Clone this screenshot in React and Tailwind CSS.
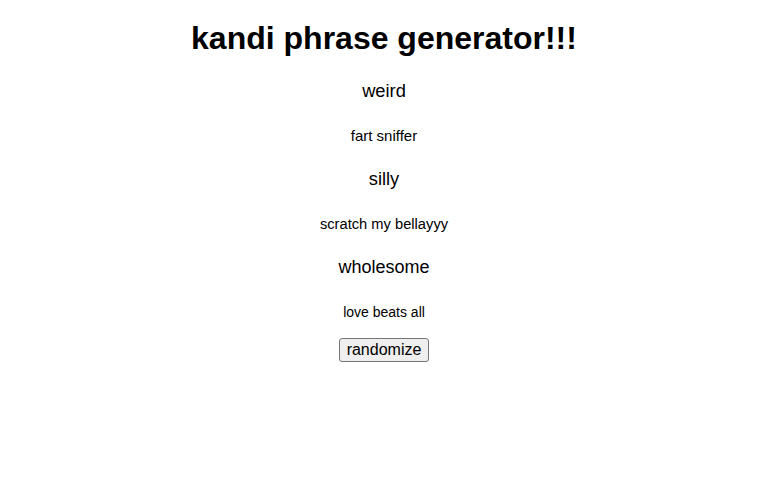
import React, { useState } from "react";

const phrases = {
  weird: ["fart sniffer", "smell my socks", "goblin mode"],
  silly: ["scratch my bellayyy", "bonk", "wiggle wiggle"],
  wholesome: ["love beats all", "you are enough", "hug me"],
};

const pick = (list) => list[Math.floor(Math.random() * list.length)];

const App = () => {
  const [current, setCurrent] = useState({
    weird: "fart sniffer",
    silly: "scratch my bellayyy",
    wholesome: "love beats all",
  });

  const randomize = () => {
    setCurrent({
      weird: pick(phrases.weird),
      silly: pick(phrases.silly),
      wholesome: pick(phrases.wholesome),
    });
  };

  return (
    <div className="min-h-[480px] bg-white text-black font-['Liberation_Sans',Arial,sans-serif] flex flex-col items-center">
      <h1 className="mt-[20px] text-[32px] leading-[37px] font-bold">
        kandi phrase generator!!!
      </h1>

      {/* category headings with their phrase below */}
      <h3 className="mt-[23px] text-[18.3px] leading-[22px]">weird</h3>
      <p className="mt-[25px] text-[15px] leading-[18px]">{current.weird}</p>

      <h3 className="mt-[23px] text-[18.3px] leading-[22px]">silly</h3>
      <p className="mt-[25px] text-[14.7px] leading-[18px]">{current.silly}</p>

      <h3 className="mt-[23px] text-[18px] leading-[22px]">wholesome</h3>
      <p className="mt-[25px] text-[14px] leading-[18px]">{current.wholesome}</p>

      <button
        onClick={randomize}
        className="mt-[17px] px-[7px] py-[1px] text-[16px] leading-[20px] bg-[#efefef] border border-[#767676] rounded-[3px] hover:bg-[#e5e5e5]"
      >
        randomize
      </button>
    </div>
  );
};

export default App;
